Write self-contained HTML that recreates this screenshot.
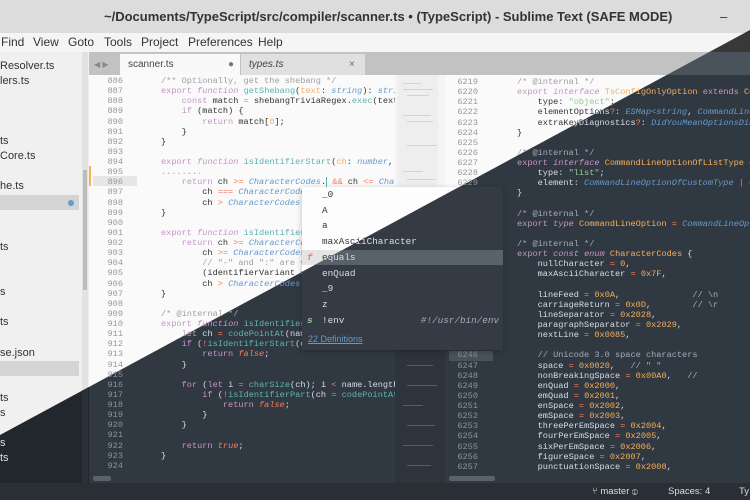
<!DOCTYPE html>
<html><head><meta charset="utf-8">
<style>
*{margin:0;padding:0;box-sizing:border-box}
body{width:750px;height:500px;overflow:hidden;font-family:"Liberation Sans",sans-serif;position:relative}
.layer{position:absolute;left:0;top:0;width:750px;height:500px;overflow:hidden}
.L{--title:#dcdcdc;--menu:#f5f5f5;--mtx:#333;--side:#f0f0f0;--stx:#333;--sel:#d4d4d4;--tabbar:#c2c2c2;--tab1:#f9f9f9;--tab2:#e0e0e0;--ttx:#444;--bg:#fafafa;--gut:#999;--hl:#e6e6e6;--tx:#333;--kw:#c594c5;--fn:#5fb3b3;--ty:#6699cc;--op:#f97b58;--num:#f9ae58;--str:#99c794;--cm:#a0a0a0;--mini:#f4f4f4;--pop:#fdfdfd;--phl:#e4e4e4;--ptx:#333;--sb:#e2e2e2;--sbt:#bcbcbc;--status:#e8e8e8}
.D{--title:#2e2e2e;--menu:#383838;--mtx:#ddd;--side:#22272e;--stx:#d8dee9;--sel:#3b434d;--tabbar:#4a525c;--tab1:#303841;--tab2:#3c444e;--ttx:#d8dee9;--bg:#303841;--gut:#8a929c;--hl:#4a525c;--tx:#d8dee9;--kw:#c695c6;--fn:#5fb4b4;--ty:#6699cc;--op:#f97b58;--num:#f9ae58;--str:#99c794;--cm:#a6acb9;--mini:#2d343c;--pop:#343b45;--phl:#59616b;--ptx:#d8dee9;--sb:#2a3038;--sbt:#5a626c;--status:#2a2f36;clip-path:polygon(0 435px,750px 30px,750px 500px,0 500px)}
.title{position:absolute;left:0;top:0;width:750px;height:33px;background:var(--title);color:var(--mtx);font-weight:bold;font-size:13px;line-height:33px;white-space:nowrap}
.title span{position:absolute;left:104px}
.menu{position:absolute;left:0;top:33px;width:750px;height:19px;background:var(--menu);color:var(--mtx);font-size:12px;line-height:19px;white-space:nowrap}
.menu span{position:absolute}
.side{position:absolute;left:0;top:52px;width:89px;height:431px;background:var(--side);color:var(--stx);font-size:11px}
.side .r{position:absolute;left:0;height:15px;line-height:15px;white-space:nowrap}
.side .sscroll{position:absolute;left:82px;top:0;width:6px;height:431px;background:var(--sb)}
.side .sthumb{position:absolute;left:83px;top:118px;width:4px;height:120px;background:var(--sbt)}
.tabbar{position:absolute;left:89px;top:52px;width:661px;height:23px;background:var(--tabbar)}
.tab{position:absolute;top:2px;height:21px;font-size:10px;line-height:21px;color:var(--ttx);padding-left:8px}
.ed{position:absolute;top:75px;height:408px;background:var(--bg);overflow:hidden}
.code{position:absolute;font-family:"Liberation Mono",monospace;font-size:8.6px;line-height:10.13px;white-space:pre;color:var(--tx)}
.gnum{text-align:right;color:var(--gut)}
.k{color:var(--kw)}.i{color:var(--kw);font-style:italic}.f{color:var(--fn)}.t{color:var(--ty);font-style:italic}.o{color:var(--op)}.n{color:var(--num)}.s{color:var(--str)}.c{color:var(--cm)}.p{color:var(--num)}.it{font-style:italic;color:var(--op)}
.mini{position:absolute;left:395px;top:75px;width:50px;height:408px;background:var(--mini)}
.pop{position:absolute;left:302px;top:187px;width:201px;height:163px;background:var(--pop);box-shadow:0 2px 6px rgba(0,0,0,.25);font-family:"Liberation Mono",monospace;font-size:9.3px;color:var(--ptx)}
.pop div{position:absolute;left:0;width:201px;height:15.7px;line-height:15.7px;padding-left:20px;white-space:nowrap}
.status{position:absolute;left:0;top:483px;width:750px;height:17px;background:var(--status);color:var(--mtx);font-size:9.5px;line-height:17px}
.status span{position:absolute}
.hsb{position:absolute;top:476px;height:5px;background:var(--sbt);border-radius:2px}
.ml{position:absolute;height:1px;background:var(--cm);opacity:.35}
</style></head><body>

<!-- LIGHT LAYER -->
<div class="layer L">
<div class="title"><span>~/Documents/TypeScript/src/compiler/scanner.ts • (TypeScript) - Sublime Text (SAFE MODE)</span><span style="left:720px;font-weight:normal">–</span></div>
<div class="menu"><span style="left:1px">Find</span><span style="left:33px">View</span><span style="left:68px">Goto</span><span style="left:104px">Tools</span><span style="left:141px">Project</span><span style="left:188px">Preferences</span><span style="left:258px">Help</span></div>
<div class="side">
<div class="r" style="top:7px">Resolver.ts</div><div class="r" style="top:22px">lers.ts</div><div class="r" style="top:82px">ts</div><div class="r" style="top:97px">Core.ts</div><div class="r" style="top:127px">he.ts</div>
<div class="r" style="top:143px;width:79px;background:var(--sel)"><span style="position:absolute;left:68px;top:5px;width:6px;height:6px;border-radius:3px;background:#6699cc"></span></div>
<div class="r" style="top:188px">ts</div><div class="r" style="top:233px">s</div><div class="r" style="top:263px">ts</div><div class="r" style="top:294px">se.json</div>
<div class="r" style="top:309px;width:79px;background:var(--sel)"></div>
<div class="r" style="top:339px">ts</div><div class="r" style="top:354px">s</div><div class="r" style="top:384px">s</div><div class="r" style="top:399px">ts</div>
<div class="sscroll"></div><div class="sthumb"></div>
</div>
<div class="tabbar">
<div class="tab" style="left:5px;color:#888;font-size:8px;padding:0">◀ ▶</div>
<div class="tab" style="left:31px;width:120px;background:var(--tab1)">scanner.ts<span style="position:absolute;left:108px;color:#777">●</span></div>
<div class="tab" style="left:152px;width:124px;background:var(--tab2);font-style:italic">types.ts<span style="position:absolute;left:108px;font-style:normal;color:#666">×</span></div>
</div>
<div class="ed" style="left:89px;width:306px">
<div style="position:absolute;left:4px;top:101px;width:44px;height:10px;background:var(--hl)"></div>
<div style="position:absolute;left:0;top:91px;width:2px;height:20px;background:#f9ae58"></div>
<div class="code gnum" style="left:0;top:1px;width:34px">886
887
888
889
890
891
892
893
894
895
896
897
898
899
900
901
902
903
904
905
906
907
908
909
910
911
912
913
914
915
916
917
918
919
920
921
922
923
924</div>
<div class="code" style="left:72px;top:1px"><span class="c">/** Optionally, get the shebang */</span>
<span class="k">export</span> <span class="i">function</span> <span class="f">getShebang</span>(<span class="p">text</span>: <span class="t">string</span>): <span class="t">string</span> | <span class="t">undefined</span> {
    <span class="k">const</span> match <span class="o">=</span> shebangTriviaRegex.<span class="f">exec</span>(text);
    <span class="k">if</span> (match) {
        <span class="k">return</span> match[<span class="n">0</span>];
    }
}

<span class="k">export</span> <span class="i">function</span> <span class="f">isIdentifierStart</span>(<span class="p">ch</span>: <span class="t">number</span>, <span class="p">languageVersion</span>: <span class="t">ScriptTarget</span>
<span class="c">........</span>
    <span class="k">return</span> ch <span class="o">&gt;=</span> <span class="t">CharacterCodes</span>.<span style="border-left:1px solid #5fb3b3"></span> <span class="o">&amp;&amp;</span> ch <span class="o">&lt;=</span> <span class="t">CharacterCodes</span>.Z
        ch <span class="o">===</span> <span class="t">CharacterCodes</span>.$ <span class="o">||</span> ch
        ch <span class="o">&gt;</span> <span class="t">CharacterCodes</span>.maxAsciiCharacter
}

<span class="k">export</span> <span class="i">function</span> <span class="f">isIdentifierPart</span>(<span class="p">ch</span>: <span class="t">number</span>,
    <span class="k">return</span> ch <span class="o">&gt;=</span> <span class="t">CharacterCodes</span>.A <span class="o">&amp;&amp;</span>
        ch <span class="o">&gt;=</span> <span class="t">CharacterCodes</span>._0 <span class="o">&amp;&amp;</span>
        <span class="c">// "-" and ":" are valid in JSX</span>
        (identifierVariant <span class="o">===</span> <span class="t">Language</span>
        ch <span class="o">&gt;</span> <span class="t">CharacterCodes</span>.maxAscii
}

<span class="c">/* @internal */</span>
<span class="k">export</span> <span class="i">function</span> <span class="f">isIdentifierText</span>(<span class="p">name</span>
    <span class="k">let</span> ch <span class="o">=</span> <span class="f">codePointAt</span>(name, <span class="n">0</span>);
    <span class="k">if</span> (<span class="o">!</span><span class="f">isIdentifierStart</span>(ch, languageVersion)) {
        <span class="k">return</span> <span class="it">false</span>;
    }

    <span class="k">for</span> (<span class="k">let</span> i <span class="o">=</span> <span class="f">charSize</span>(ch); i <span class="o">&lt;</span> name.length; i <span class="o">+=</span>
        <span class="k">if</span> (<span class="o">!</span><span class="f">isIdentifierPart</span>(ch <span class="o">=</span> <span class="f">codePointAt</span>(name,
            <span class="k">return</span> <span class="it">false</span>;
        }
    }

    <span class="k">return</span> <span class="it">true</span>;
}
</div>
</div>
<div class="mini"><div style="position:absolute;left:3px;top:0;width:40px;height:160px;background:rgba(0,0,0,.025)"></div>
<div class="ml" style="left:8px;top:8px;width:18px"></div><div class="ml" style="left:8px;top:14px;width:30px"></div><div class="ml" style="left:12px;top:20px;width:22px"></div><div class="ml" style="left:8px;top:40px;width:28px"></div><div class="ml" style="left:12px;top:46px;width:26px"></div><div class="ml" style="left:12px;top:70px;width:30px"></div><div class="ml" style="left:8px;top:96px;width:20px"></div><div class="ml" style="left:12px;top:104px;width:28px"></div><div class="ml" style="left:8px;top:130px;width:30px"></div><div class="ml" style="left:12px;top:140px;width:24px"></div>
</div>
<div class="ed" style="left:445px;width:305px">
<div style="position:absolute;left:4px;top:276px;width:44px;height:10px;background:var(--hl)"></div>
<div class="code gnum" style="left:0;top:2px;width:33px">6219
6220
6221
6222
6223
6224
6225
6226
6227
6228
6229
6230
6231
6232
6233
6234
6235
6236
6237
6238
6239
6240
6241
6242
6243
6244
6245
6246
6247
6248
6249
6250
6251
6252
6253
6254
6255
6256
6257</div>
<div class="code" style="left:72px;top:2px"><span class="c">/* @internal */</span>
<span class="k">export</span> <span class="i">interface</span> <span class="n">TsConfigOnlyOption</span> <span class="k">extends</span> <span class="n">CommandLineOptionBase</span> {
    type: <span class="s">"object"</span>;
    elementOptions<span class="o">?</span>: <span class="t">ESMap&lt;string</span>, <span class="t">CommandLineOption</span>&gt;;
    extraKeyDiagnostics<span class="o">?</span>: <span class="t">DidYouMeanOptionsDiagnostics</span>;
}

<span class="c">/* @internal */</span>
<span class="k">export</span> <span class="i">interface</span> <span class="n">CommandLineOptionOfListType</span> <span class="k">extends</span> <span class="n">CommandLineOptionBase</span> {
    type: <span class="s">"list"</span>;
    element: <span class="t">CommandLineOptionOfCustomType</span> <span class="o">|</span> <span class="t">CommandLineOptionOfPrimitiveType</span>;
}

<span class="c">/* @internal */</span>
<span class="k">export</span> <span class="i">type</span> <span class="n">CommandLineOption</span> <span class="o">=</span> <span class="t">CommandLineOptionOfCustomType</span>

<span class="c">/* @internal */</span>
<span class="k">export</span> <span class="i">const</span> <span class="i">enum</span> <span class="n">CharacterCodes</span> {
    nullCharacter <span class="o">=</span> <span class="n">0</span>,
    maxAsciiCharacter <span class="o">=</span> <span class="n">0x7F</span>,

    lineFeed <span class="o">=</span> <span class="n">0x0A</span>,              <span class="c">// \n</span>
    carriageReturn <span class="o">=</span> <span class="n">0x0D</span>,        <span class="c">// \r</span>
    lineSeparator <span class="o">=</span> <span class="n">0x2028</span>,
    paragraphSeparator <span class="o">=</span> <span class="n">0x2029</span>,
    nextLine <span class="o">=</span> <span class="n">0x0085</span>,

    <span class="c">// Unicode 3.0 space characters</span>
    space <span class="o">=</span> <span class="n">0x0020</span>,   <span class="c">// " "</span>
    nonBreakingSpace <span class="o">=</span> <span class="n">0x00A0</span>,   <span class="c">//</span>
    enQuad <span class="o">=</span> <span class="n">0x2000</span>,
    emQuad <span class="o">=</span> <span class="n">0x2001</span>,
    enSpace <span class="o">=</span> <span class="n">0x2002</span>,
    emSpace <span class="o">=</span> <span class="n">0x2003</span>,
    threePerEmSpace <span class="o">=</span> <span class="n">0x2004</span>,
    fourPerEmSpace <span class="o">=</span> <span class="n">0x2005</span>,
    sixPerEmSpace <span class="o">=</span> <span class="n">0x2006</span>,
    figureSpace <span class="o">=</span> <span class="n">0x2007</span>,
    punctuationSpace <span class="o">=</span> <span class="n">0x2008</span>,</div>
</div>
<div class="hsb" style="left:93px;width:18px"></div><div class="hsb" style="left:449px;width:46px"></div>
<div class="pop">
<div style="top:0">_0</div><div style="top:15.7px">A</div><div style="top:31.4px">a</div><div style="top:47.1px">maxAsciiCharacter</div>
<div style="top:62.8px;background:var(--phl)"><span style="position:absolute;left:5px;color:#f97b58;font-style:italic;font-weight:bold">f</span>equals</div>
<div style="top:78.5px">enQuad</div><div style="top:94.2px">_9</div><div style="top:109.9px">z</div>
<div style="top:125.6px"><span style="position:absolute;left:5px;color:#99c794;font-style:italic;font-weight:bold">s</span>!env<span style="position:absolute;right:4px;font-style:italic;color:var(--cm)">#!/usr/bin/env</span></div>
<div style="top:145px;font-family:'Liberation Sans',sans-serif;font-size:9px;padding-left:6px;color:#6699cc;text-decoration:underline">22 Definitions</div>
</div>
<div class="status"><span style="left:592px">⑂ master ①</span><span style="left:668px">Spaces: 4</span><span style="left:739px">Ty</span></div>
</div>

<!-- DARK LAYER -->
<div class="layer D">
<div class="title"><span>~/Documents/TypeScript/src/compiler/scanner.ts • (TypeScript) - Sublime Text (SAFE MODE)</span><span style="left:720px;font-weight:normal">–</span></div>
<div class="menu"><span style="left:1px">Find</span><span style="left:33px">View</span><span style="left:68px">Goto</span><span style="left:104px">Tools</span><span style="left:141px">Project</span><span style="left:188px">Preferences</span><span style="left:258px">Help</span></div>
<div class="side">
<div class="r" style="top:7px">Resolver.ts</div><div class="r" style="top:22px">lers.ts</div><div class="r" style="top:82px">ts</div><div class="r" style="top:97px">Core.ts</div><div class="r" style="top:127px">he.ts</div>
<div class="r" style="top:188px">ts</div><div class="r" style="top:233px">s</div><div class="r" style="top:263px">ts</div><div class="r" style="top:294px">se.json</div>
<div class="r" style="top:339px">ts</div><div class="r" style="top:354px">s</div><div class="r" style="top:384px">s</div><div class="r" style="top:399px">ts</div>
<div class="sscroll"></div><div class="sthumb"></div>
</div>
<div class="tabbar"></div>
<div class="ed" style="left:89px;width:306px">
<div class="code gnum" style="left:0;top:1px;width:34px">886
887
888
889
890
891
892
893
894
895
896
897
898
899
900
901
902
903
904
905
906
907
908
909
910
911
912
913
914
915
916
917
918
919
920
921
922
923
924</div>
<div class="code" style="left:72px;top:1px"><span class="c">/** Optionally, get the shebang */</span>
<span class="k">export</span> <span class="i">function</span> <span class="f">getShebang</span>(<span class="p">text</span>: <span class="t">string</span>): <span class="t">string</span> | <span class="t">undefined</span> {
    <span class="k">const</span> match <span class="o">=</span> shebangTriviaRegex.<span class="f">exec</span>(text);
    <span class="k">if</span> (match) {
        <span class="k">return</span> match[<span class="n">0</span>];
    }
}

<span class="k">export</span> <span class="i">function</span> <span class="f">isIdentifierStart</span>(<span class="p">ch</span>: <span class="t">number</span>, <span class="p">languageVersion</span>: <span class="t">ScriptTarget</span>

    <span class="k">return</span> ch <span class="o">&gt;=</span> <span class="t">CharacterCodes</span>.  <span class="o">&amp;&amp;</span> ch <span class="o">&lt;=</span> <span class="t">CharacterCodes</span>.Z
        ch <span class="o">===</span> <span class="t">CharacterCodes</span>.$ <span class="o">||</span> ch
        ch <span class="o">&gt;</span> <span class="t">CharacterCodes</span>.maxAsciiCharacter
}

<span class="k">export</span> <span class="i">function</span> <span class="f">isIdentifierPart</span>(<span class="p">ch</span>: <span class="t">number</span>,
    <span class="k">return</span> ch <span class="o">&gt;=</span> <span class="t">CharacterCodes</span>.A <span class="o">&amp;&amp;</span>
        ch <span class="o">&gt;=</span> <span class="t">CharacterCodes</span>._0 <span class="o">&amp;&amp;</span>
        <span class="c">// "-" and ":" are valid in JSX</span>
        (identifierVariant <span class="o">===</span> <span class="t">Language</span>
        ch <span class="o">&gt;</span> <span class="t">CharacterCodes</span>.maxAscii
}

<span class="c">/* @internal */</span>
<span class="k">export</span> <span class="i">function</span> <span class="f">isIdentifierText</span>(<span class="p">name</span>
    <span class="k">let</span> ch <span class="o">=</span> <span class="f">codePointAt</span>(name, <span class="n">0</span>);
    <span class="k">if</span> (<span class="o">!</span><span class="f">isIdentifierStart</span>(ch, languageVersion)) {
        <span class="k">return</span> <span class="it">false</span>;
    }

    <span class="k">for</span> (<span class="k">let</span> i <span class="o">=</span> <span class="f">charSize</span>(ch); i <span class="o">&lt;</span> name.length; i <span class="o">+=</span>
        <span class="k">if</span> (<span class="o">!</span><span class="f">isIdentifierPart</span>(ch <span class="o">=</span> <span class="f">codePointAt</span>(name,
            <span class="k">return</span> <span class="it">false</span>;
        }
    }

    <span class="k">return</span> <span class="it">true</span>;
}
</div>
</div>
<div class="mini">
<div class="ml" style="left:8px;top:222px;width:18px"></div><div class="ml" style="left:12px;top:236px;width:28px"></div><div class="ml" style="left:10px;top:252px;width:22px"></div><div class="ml" style="left:8px;top:270px;width:30px"></div><div class="ml" style="left:12px;top:290px;width:26px"></div><div class="ml" style="left:12px;top:310px;width:30px"></div><div class="ml" style="left:8px;top:330px;width:20px"></div><div class="ml" style="left:12px;top:350px;width:28px"></div><div class="ml" style="left:8px;top:370px;width:30px"></div><div class="ml" style="left:12px;top:390px;width:24px"></div>
</div>
<div class="ed" style="left:445px;width:305px">
<div style="position:absolute;left:4px;top:276px;width:44px;height:10px;background:var(--hl)"></div>
<div class="code gnum" style="left:0;top:2px;width:33px">6219
6220
6221
6222
6223
6224
6225
6226
6227
6228
6229
6230
6231
6232
6233
6234
6235
6236
6237
6238
6239
6240
6241
6242
6243
6244
6245
6246
6247
6248
6249
6250
6251
6252
6253
6254
6255
6256
6257</div>
<div class="code" style="left:72px;top:2px"><span class="c">/* @internal */</span>
<span class="k">export</span> <span class="i">interface</span> <span class="n">TsConfigOnlyOption</span> <span class="k">extends</span> <span class="n">CommandLineOptionBase</span> {
    type: <span class="s">"object"</span>;
    elementOptions<span class="o">?</span>: <span class="t">ESMap&lt;string</span>, <span class="t">CommandLineOption</span>&gt;;
    extraKeyDiagnostics<span class="o">?</span>: <span class="t">DidYouMeanOptionsDiagnostics</span>;
}

<span class="c">/* @internal */</span>
<span class="k">export</span> <span class="i">interface</span> <span class="n">CommandLineOptionOfListType</span> <span class="k">extends</span> <span class="n">CommandLineOptionBase</span> {
    type: <span class="s">"list"</span>;
    element: <span class="t">CommandLineOptionOfCustomType</span> <span class="o">|</span> <span class="t">CommandLineOptionOfPrimitiveType</span>;
}

<span class="c">/* @internal */</span>
<span class="k">export</span> <span class="i">type</span> <span class="n">CommandLineOption</span> <span class="o">=</span> <span class="t">CommandLineOptionOfCustomType</span>

<span class="c">/* @internal */</span>
<span class="k">export</span> <span class="i">const</span> <span class="i">enum</span> <span class="n">CharacterCodes</span> {
    nullCharacter <span class="o">=</span> <span class="n">0</span>,
    maxAsciiCharacter <span class="o">=</span> <span class="n">0x7F</span>,

    lineFeed <span class="o">=</span> <span class="n">0x0A</span>,              <span class="c">// \n</span>
    carriageReturn <span class="o">=</span> <span class="n">0x0D</span>,        <span class="c">// \r</span>
    lineSeparator <span class="o">=</span> <span class="n">0x2028</span>,
    paragraphSeparator <span class="o">=</span> <span class="n">0x2029</span>,
    nextLine <span class="o">=</span> <span class="n">0x0085</span>,

    <span class="c">// Unicode 3.0 space characters</span>
    space <span class="o">=</span> <span class="n">0x0020</span>,   <span class="c">// " "</span>
    nonBreakingSpace <span class="o">=</span> <span class="n">0x00A0</span>,   <span class="c">//</span>
    enQuad <span class="o">=</span> <span class="n">0x2000</span>,
    emQuad <span class="o">=</span> <span class="n">0x2001</span>,
    enSpace <span class="o">=</span> <span class="n">0x2002</span>,
    emSpace <span class="o">=</span> <span class="n">0x2003</span>,
    threePerEmSpace <span class="o">=</span> <span class="n">0x2004</span>,
    fourPerEmSpace <span class="o">=</span> <span class="n">0x2005</span>,
    sixPerEmSpace <span class="o">=</span> <span class="n">0x2006</span>,
    figureSpace <span class="o">=</span> <span class="n">0x2007</span>,
    punctuationSpace <span class="o">=</span> <span class="n">0x2008</span>,</div>
</div>
<div class="hsb" style="left:93px;width:18px"></div><div class="hsb" style="left:449px;width:46px"></div>
<div class="pop">
<div style="top:0">_0</div><div style="top:15.7px">A</div><div style="top:31.4px">a</div><div style="top:47.1px">maxAsciiCharacter</div>
<div style="top:62.8px;background:var(--phl)"><span style="position:absolute;left:5px;color:#f97b58;font-style:italic;font-weight:bold">f</span>equals</div>
<div style="top:78.5px">enQuad</div><div style="top:94.2px">_9</div><div style="top:109.9px">z</div>
<div style="top:125.6px"><span style="position:absolute;left:5px;color:#99c794;font-style:italic;font-weight:bold">s</span>!env<span style="position:absolute;right:4px;font-style:italic;color:var(--cm)">#!/usr/bin/env</span></div>
<div style="top:145px;font-family:'Liberation Sans',sans-serif;font-size:9px;padding-left:6px;color:#6699cc;text-decoration:underline">22 Definitions</div>
</div>
<div class="status"><span style="left:592px">⑂ master ①</span><span style="left:668px">Spaces: 4</span><span style="left:739px">Ty</span></div>
</div>
</body></html>
